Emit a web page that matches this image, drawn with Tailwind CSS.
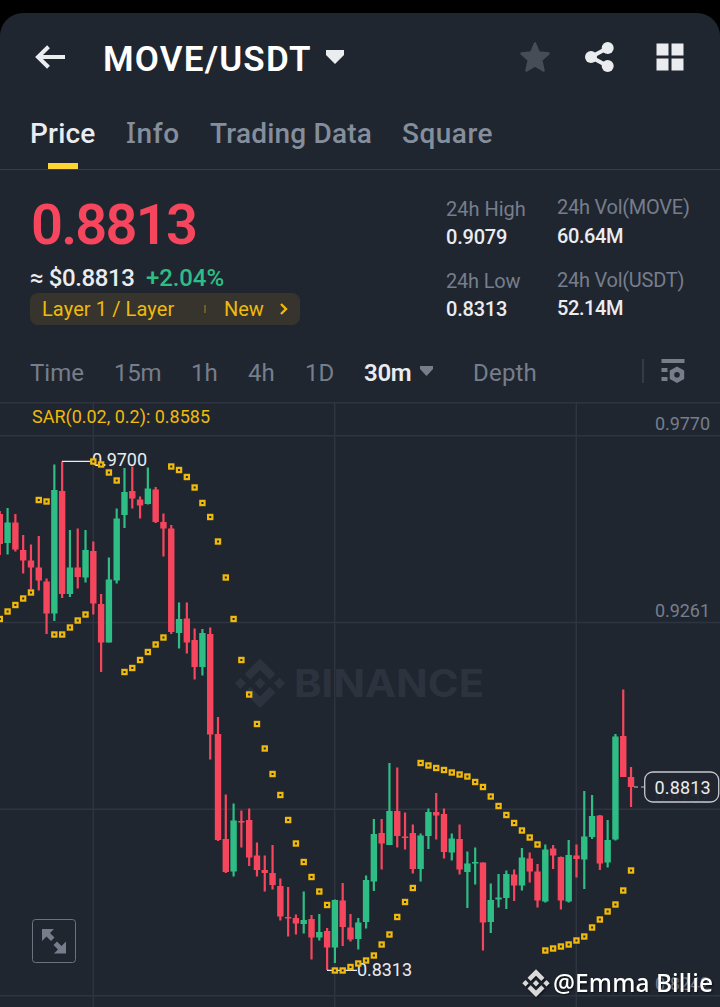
<!DOCTYPE html>
<html lang="en">
<head>
    <meta charset="UTF-8">
    <meta name="viewport" content="width=device-width, initial-scale=1.0">
    <title>MOVE/USDT</title>
    <script src="https://cdn.jsdelivr.net/npm/@tailwindcss/browser@4"></script>
</head>
<body class="bg-black font-['Roboto',sans-serif] text-[#eaecef]">
    <div class="w-[720px] h-[1007px] pt-[13px] overflow-hidden">
        <div class="h-[994px] bg-[#202630] rounded-t-[23px] overflow-hidden flex flex-col">

            <!-- Header -->
            <header class="h-[88px] shrink-0 flex items-center pl-[34px] pr-[36px]">
                <svg class="w-8 h-7" viewBox="0 0 32 28" fill="none" stroke="#eaecef" stroke-width="4">
                    <path d="M31 14H4M14.500 3.700L4 14l10.500 10.300"/>
                </svg>
                <h1 class="ml-[37px] w-[207px] text-[35px] leading-[44px] mt-[5px] font-semibold text-white tracking-[1.2px] whitespace-nowrap">MOVE/USDT</h1>
                <svg class="ml-4 w-[18px] h-[14px]" viewBox="0 0 18 14"><path d="M0 0h18v5L9 14 0 5z" fill="#eaecef"/></svg>
                <div class="ml-auto flex items-center">
                    <svg class="w-[30px] h-[30px]" viewBox="0 0 30 30">
                        <path d="M15 1.500L18.700 10.500L28.500 11.500L21.200 18L23.500 28.500L15 23.500L6.500 28.500L8.800 18L1.500 11.500L11.300 10.500Z" fill="#474d57" stroke="#474d57" stroke-width="2.500" stroke-linejoin="round"/>
                    </svg>
                    <svg class="ml-[35px] w-[29px] h-[30px]" viewBox="0 0 29 30">
                        <path d="M22.500 6L6 15l16.500 9" fill="none" stroke="#eaecef" stroke-width="4"/>
                        <circle cx="22.700" cy="6" r="6" fill="#eaecef"/>
                        <circle cx="6" cy="15" r="6" fill="#eaecef"/>
                        <circle cx="22.700" cy="24" r="6" fill="#eaecef"/>
                    </svg>
                    <svg class="ml-[42px] w-7 h-7" viewBox="0 0 28 28" fill="#eaecef">
                        <path d="M.5.500h12v12H.500zM15.500.500h12v12h-12zM.5 15.500h12v12H.500zM15.500 15.500h12v12h-12z"/>
                    </svg>
                </div>
            </header>

            <!-- Tabs -->
            <nav class="h-[69px] shrink-0 border-b border-[#363d48] grid grid-cols-[96px_84px_192px_auto] pl-[30px] text-[28px] leading-8 pt-[17px] font-medium text-[#848e9c] whitespace-nowrap">
                <div class="relative text-[#eaecef] tracking-[0.2px]">Price
                    <span class="absolute left-[18px] top-[45px] w-[30px] h-[6px] bg-[#fcd535]"></span>
                </div>
                <div class="tracking-[0.6px]"><span class="font-['Noto_Sans',sans-serif] leading-[0]">I</span>nfo</div>
                <div class="tracking-[0.2px]">Trading Data</div>
                <div class="tracking-[0.5px]">Square</div>
            </nav>

            <!-- Price summary -->
            <section class="h-[170px] shrink-0 flex pl-[30px]">
                <div class="w-[416px]">
                    <div class="mt-[21px] ml-px h-[66px] text-[56px] leading-[68px] font-semibold text-[#f6465d] tracking-[-1.8px]">0.8813</div>
                    <div class="mt-[6px] h-[30px] flex text-2xl leading-[30px] font-medium whitespace-nowrap">
                        <span class="w-[116px] tracking-[-0.4px]">≈ $0.8813</span>
                        <span class="text-[#2ebd85] tracking-[-0.1px]">+2.04%</span>
                    </div>
                    <div class="w-[270px] h-8 rounded-lg bg-[#36342c] text-[#f0b90b] text-xl leading-8 flex items-center pl-3 whitespace-nowrap">
                        <span class="w-[162px] tracking-[0.1px]">Layer 1 / Layer</span>
                        <span class="w-[2px] h-2 bg-[#6f5c1f]"></span>
                        <span class="ml-[18px] w-[56px]">New</span>
                        <svg class="w-2 h-3" viewBox="0 0 8 12" fill="none" stroke="#f0b90b" stroke-width="2.400"><path d="M1 1l5 5-5 5"/></svg>
                    </div>
                </div>
                <div class="w-[111px] pt-[25px] text-xl leading-7 whitespace-nowrap">
                    <div class="text-[#767e8c]">24h High</div>
                    <div class="font-medium tracking-[-0.2px]">0.9079</div>
                    <div class="mt-4 text-[#767e8c] tracking-[-0.2px]">24h Low</div>
                    <div class="font-medium tracking-[-0.2px]">0.8313</div>
                </div>
                <div class="pt-[23px] text-xl leading-7 whitespace-nowrap">
                    <div class="text-[#767e8c] tracking-[-0.25px]">24h Vol(MOVE)</div>
                    <div class="mt-px font-medium tracking-[-0.4px]">60.64M</div>
                    <div class="mt-4 text-[#767e8c] tracking-[-0.25px]">24h Vol(USDT)</div>
                    <div class="font-medium tracking-[-0.4px]">52.14M</div>
                </div>
            </section>

            <!-- Intervals -->
            <section class="h-[62px] shrink-0 flex items-center pl-[30px] pr-[35px] text-2xl text-[#767e8c] whitespace-nowrap">
                <div class="pt-[3px] flex">
                    <span class="w-[84px]">Time</span>
                    <span class="w-[77px] tracking-[-0.3px]">15m</span>
                    <span class="w-[57px]">1h</span>
                    <span class="w-[57px]">4h</span>
                    <span class="w-[59px]">1D</span>
                    <span class="w-[56px] font-semibold text-[#eaecef] tracking-[-0.3px]">30m</span>
                </div>
                <svg class="w-[13px] h-[10px]" viewBox="0 0 13 10"><path d="M0 0h13v3L6.500 10 0 3z" fill="#767e8c"/></svg>
                <span class="pt-[3px] ml-10 tracking-[0.2px]">Depth</span>
                <span class="ml-auto w-[2px] h-6 bg-[#333b47]"></span>
                <svg class="ml-[17px] w-6 h-6" viewBox="0 0 24 24" fill="#767e8c">
                    <path d="M.5 0h23v4H.500zM.5 9h6v4h-6zM.5 18h6v4h-6z"/>
                    <path fill-rule="evenodd" d="M16 7.500l7.200 4v8.500L16 24l-7.200-4v-8.500zM16 13a2.800 2.800 0 1 0 0 5.600a2.800 2.800 0 1 0 0-5.600z"/>
                </svg>
            </section>

            <!-- Chart, y axis in page pixels -->
            <svg id="chart" class="w-[720px] h-[605px] shrink-0" viewBox="0 402 720 605">
                <g stroke="#2e3540" stroke-width="1.500">
                    <path d="M0 402.500H720" stroke-width="2"/>
                    <path d="M0 435.700H720M0 622.500H720M0 809.300H720M0 995.700H720M93.300 403V1007M334.700 403V1007M576.300 403V1007"/>
                </g>
                <g id="watermark" fill="#2d333e">
                    <path d="M260 658.500l15.500 15.500-5.700 5.700L260 670l-9.800 9.700-5.700-5.700zM260 708l15.500-15.500-5.700-5.700L260 696.500l-9.800-9.700-5.700 5.700zM240.500 677.700l5.600 5.600-5.600 5.600-5.600-5.600zM260 677.700l5.600 5.600-5.600 5.600-5.600-5.600zM279.500 677.700l5.600 5.600-5.600 5.600-5.600-5.600z"/>
                    <text x="294" y="697" font-family="Inter, sans-serif" font-weight="700" font-size="38" textLength="190" lengthAdjust="spacingAndGlyphs">BINANCE</text>
                </g>
                <g font-size="18" fill="#767e8c">
                    <text x="655" y="430" textLength="55">0.9770</text>
                    <text x="655" y="617" textLength="55">0.9261</text>
                    <text x="655" y="803" textLength="55" fill="#3a414c">0.8752</text>
                    <text x="655" y="990" textLength="55">0.8242</text>
                </g>
                <text x="32" y="423" font-size="18" fill="#f0b90b" textLength="178">SAR(0.02, 0.2): 0.8585</text>
                <g id="candles"></g>
                <path d="M62 461.300H93M327 970.300H357" stroke="#eaecef" stroke-width="1.300"/>
                <g font-size="18" fill="#eaecef">
                    <text x="92" y="466" textLength="55">0.9700</text>
                    <text x="357" y="976" textLength="55">0.8313</text>
                </g>
                <g id="sar" fill="#20262f" stroke="#f0b90b" stroke-width="2.200"></g>
                <path d="M634 787H645" stroke="#848e9c" stroke-width="1.500" stroke-dasharray="4 3"/>
                <rect x="644.700" y="772" width="74" height="30" rx="8" fill="#202630" fill-opacity=".75" stroke="#c5c8cd" stroke-width="1.300"/>
                <text x="654.500" y="794" font-size="18" fill="#eaecef" textLength="56">0.8813</text>

                <!-- Fullscreen button -->
                <rect x="32.500" y="919.500" width="43" height="43" rx="3" fill="none" stroke="#6b7380"/>
                <path d="M42 929h12l-4 4 4.500 4.500-3.500 3.500-4.500-4.500-4.500 4.500zM66 953.500H54l4-4-4.500-4.500 3.500-3.500 4.500 4.500 4.500-4.500z" fill="#767e8c"/>

                <!-- Author -->
                <g style="filter: drop-shadow(1px 1px 1px #000a)">
                    <path fill="#d9d9d9" d="M536 969.300l8.500 8.500-3.200 3.200-5.300-5.300-5.300 5.300-3.200-3.200zM536 997l8.500-8.500-3.200-3.200-5.300 5.300-5.300-5.300-3.200 3.200zM525.500 980l3.200 3.200-3.200 3.200-3.200-3.200zM536 980l3.200 3.200-3.200 3.200-3.200-3.200zM546.500 980l3.200 3.200-3.200 3.200-3.200-3.200z"/>
                    <text x="553" y="991.500" font-family="Noto Sans, sans-serif" font-weight="500" font-size="24.500" fill="#fff" textLength="160">@Emma Billie</text>
                </g>
            </svg>
        </div>
    </div>

    <script>
        // [color, high, low, body top, body bottom, sar]
        const candles = [
            ['r',511,555,514,544,619], ['g',508,554.5,522.5,543,611.5], ['r',514,551.5,522.5,549.5,605],
            ['r',535,573.5,550,560.5,598.5], ['r',544.5,589,560.5,567.5,592.5], ['r',536,590.5,567.5,580.5,500],
            ['r',578.5,634,581.5,613.5,501.5], ['g',464.5,621,490,613.5,634.5], ['r',461.5,598,491,594,634.5],
            ['g',530,597,567.5,594,627.5], ['r',528.5,588.5,567.5,577,620.5], ['g',530,582.5,550,577.5,614.5],
            ['r',541.5,614.5,551,603.5,461.5], ['r',594,672,604,642.5,464.5], ['g',557.5,642.5,579.5,642.5,472.5],
            ['g',508.5,583.5,518.5,580.5,480.5], ['g',468,528,492,515,672], ['r',466.5,508.5,491,498.5,668],
            ['r',496.5,518.5,499.5,505.5,660], ['g',467.5,504.5,488.5,504,652], ['r',487,523,489.5,522,644.5],
            ['r',513.5,556.5,522,528.5,637.5], ['r',525,634,528.5,632,466.5], ['g',602.5,648.5,619,633,470],
            ['r',602.5,653.5,618.5,642.5,477], ['r',628.5,679.5,640,667,487.5], ['g',629,675.5,633,667,503],
            ['r',627.5,759.5,634,734.5,517], ['r',717,841,734,840,541.5], ['r',794.5,873,839,872,577.5],
            ['g',803.5,876.5,820.5,871.5,619], ['r',810.5,847.5,821,822.5,660], ['r',808.5,866,820,857.5,694.5],
            ['r',842.5,876.5,855.5,870,724], ['r',855.5,891.5,870,873,748.5], ['r',845,889.5,873,885,774],
            ['r',878.5,920.5,886,916.5,795], ['r',887,936.5,917,918.5,820], ['r',914.5,934.5,918,923.5,843.5],
            ['g',891.5,933.5,920,924,862], ['r',915,959.5,919,937.5,877], ['g',914,940.5,932,937.5,891.5],
            ['r',928,970,931,947.5,905], ['g',899.5,963,900,947.5,970.5], ['r',883,946,900.5,927,970.5],
            ['r',914,941.5,927.5,939.5,967], ['g',918,949.5,922.5,939,963.5], ['g',875.5,928.5,880,922,960.5],
            ['g',819,891,834,881.5,955.5], ['r',819,869.5,833,843.5,944.5], ['g',763,845,811,845,934.5],
            ['r',767.5,847.5,811,836,917], ['r',812.5,849.5,836.5,838,902], ['r',824.5,873.5,833,869,888],
            ['g',833.5,881.5,835.5,869,763], ['g',808.5,849,812,836,765.5], ['r',793,839.5,812,815.5,768],
            ['r',808.5,858.5,814,852,770], ['g',833.5,860.5,838.5,852.5,772.5], ['r',824.5,874.5,839,869.5,774.5],
            ['g',851.5,908,863.5,872,776.5], ['g',847.5,884.5,862,863.5,782], ['r',862.5,950.5,862.5,922.5,787],
            ['g',883.5,933,900,922,796.5], ['g',874,907.5,897.5,899.5,806], ['g',870.5,909,874,898,815],
            ['r',869.5,901,874.5,885.5,823], ['g',848,890.5,857.5,885.5,830.5], ['r',852.5,882.5,858.5,871.5,837.5],
            ['r',864,907.5,871.5,900.5,844.5], ['g',844.5,902.5,849.5,901.5,950.5], ['r',845,869,848.5,855.5,948.5],
            ['r',856.5,909.5,857,900.5,946.5], ['g',840,902.5,855,901.5,944.5], ['r',844.5,877.5,855.5,859,940.5],
            ['g',791,889,836.5,859.5,936.5], ['g',795,839,816,837,927.5], ['r',815,870,815.5,863.5,919.5],
            ['g',820,867.5,840,862.5,911.5], ['g',734,840.5,736.5,839.5,904.5], ['r',689.5,777,736,777,890.5],
            ['r',767,807,777,787,870.5]
        ];
        const colors = { r: '#f6465d', g: '#2ebd85' };
        const xAt = i => 7.793 * i - 0.2;

        document.getElementById('candles').innerHTML = candles.map(([c, high, low, top, bottom], i) => `
            <g fill="${colors[c]}">
                <rect x="${xAt(i) - 1.1}" y="${high}" width="2.2" height="${low - high}"/>
                <rect x="${xAt(i) - 3.2}" y="${top}" width="6.4" height="${bottom - top}"/>
            </g>
        `).join('');

        document.getElementById('sar').innerHTML = candles.map((d, i) => `
            <rect x="${xAt(i) - 2.1}" y="${d[5] - 2.1}" width="4.2" height="4.2"/>
        `).join('');
    </script>
</body>
</html>
